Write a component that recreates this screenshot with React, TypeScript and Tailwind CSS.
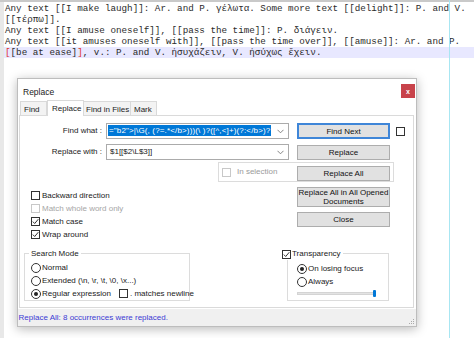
import React from "react";

const ui = { fontFamily: '"Liberation Sans", Arial, sans-serif' };
const mono = { fontFamily: '"Liberation Mono", "DejaVu Sans Mono", monospace' };

function Check({ checked = false, disabled = false }: { checked?: boolean; disabled?: boolean }) {
  return (
    <span
      className={`w-[9px] h-[9px] shrink-0 border bg-white flex items-center justify-center ${
        disabled ? "border-[#c8c8c8]" : "border-[#333]"
      }`}
    >
      {checked && (
        <svg width="7" height="7" viewBox="0 0 7 7">
          <path d="M0.8 3.6 L2.7 5.5 L6.3 1.2" fill="none" stroke="#333" strokeWidth="1" />
        </svg>
      )}
    </span>
  );
}

function Radio({ on = false }: { on?: boolean }) {
  return (
    <span className="w-[10px] h-[10px] shrink-0 rounded-full border border-[#333] bg-white flex items-center justify-center">
      {on && <span className="w-[4px] h-[4px] rounded-full bg-[#222]" />}
    </span>
  );
}

function Btn({ children, focus = false, className = "" }: { children: React.ReactNode; focus?: boolean; className?: string }) {
  return (
    <div
      className={`w-[93px] shrink-0 flex items-center justify-center text-center leading-[9px] text-[#111] bg-[#e1e1e1] ${
        focus ? "border-2 border-[#3f86d8]" : "border border-[#adadad]"
      } ${className}`}
    >
      {children}
    </div>
  );
}

function Chevron() {
  return (
    <svg width="7" height="5" viewBox="0 0 7 5" className="mr-[4px] shrink-0">
      <path d="M0.5 0.8 L3.5 3.8 L6.5 0.8" fill="none" stroke="#777" strokeWidth="0.9" />
    </svg>
  );
}

export default function App() {
  return (
    <div className="relative w-[474px] h-[338px] bg-white overflow-hidden">
      {/* editor */}
      <div className="flex flex-col h-full">
        <div className="h-[2px] bg-[#c9c9c9]" />
        <div className="flex flex-1">
          <div className="w-[4px] bg-[#e8e8e8]" />
          <div className="flex-1 pt-[1px] text-[9.25px] leading-[11px] text-[#2b2b2b] whitespace-pre" style={mono}>
            <div className="pl-[1px] h-[11px]">Any text [[I make laugh]]: Ar. and P. γέλωτα. Some more text [[delight]]: P. and V.</div>
            <div className="pl-[1px] h-[11px]">[[τέρπω]].</div>
            <div className="pl-[1px] h-[11px]">Any text [[I amuse oneself]], [[pass the time]]: P. διάγειν.</div>
            <div className="pl-[1px] h-[11px]">Any text [[it amuses oneself with]], [[pass the time over]], [[amuse]]: Ar. and P.</div>
            <div className="pl-[1px] h-[11px] bg-[#e8e8ff]">
              <span className="text-[#e0302a]">[</span>[be at ease]<span className="text-[#e0302a]">]</span>, v.: P. and V. ἡσυχάζειν, V. ἡσύχως ἔχειν.
            </div>
          </div>
        </div>
      </div>
      {/* edge marker */}
      <div className="absolute left-[449px] top-0 w-[1px] h-full bg-[#a8e6f2]" />

      {/* dialog */}
      <div
        className="absolute left-[17px] top-[78px] w-[400px] h-[249px] bg-white border border-[#bdbdbd] shadow-[0_2px_10px_rgba(0,0,0,0.28)] flex flex-col text-[8px] text-[#1a1a1a] whitespace-nowrap"
        style={ui}
      >
        {/* title bar */}
        <div className="h-[21px] flex items-start justify-between">
          <div className="pl-[5px] pt-[7px] text-[8.5px] text-[#222]">Replace</div>
          <div className="mt-[5px] mr-[1px] w-[14px] h-[14px] bg-[#c8434b] flex items-center justify-center text-white text-[7px] font-bold leading-none">
            x
          </div>
        </div>
        {/* tabs */}
        <div className="h-[15px] flex items-end pl-[2px]">
          <div className="w-[27px] h-[14px] border border-b-0 border-[#d9d9d9] bg-[#f3f3f3] pl-[3px] pt-[2px] text-[#222]">Find</div>
          <div className="w-[37px] h-[16px] border border-b-0 border-[#d9d9d9] bg-white pl-[4px] pt-[2px] text-[#222] relative top-[1px]">Replace</div>
          <div className="w-[47px] h-[14px] border border-b-0 border-l-0 border-[#d9d9d9] bg-[#f3f3f3] pl-[2px] pt-[2px] text-[#222]">Find in Files</div>
          <div className="w-[26px] h-[14px] border border-b-0 border-l-0 border-[#d9d9d9] bg-[#f3f3f3] pl-[3px] pt-[2px] text-[#222]">Mark</div>
        </div>
        {/* panel */}
        <div className="h-[193px] ml-[1px] mr-[2px] border border-[#dadada] flex flex-col">
          {/* row 1 */}
          <div className="mt-[7px] h-[16px] flex items-center">
            <div className="w-[82px] text-right text-[#222]">Find what :</div>
            <div className="ml-[4px] w-[183px] h-[16px] border border-[#ababab] flex items-center overflow-hidden">
              <div className="flex-1 overflow-hidden whitespace-nowrap pl-[1px]">
                <span className="bg-[#0078d7] text-white px-[1px] py-[1px] tracking-[0.15px]">{'="b2">|\\G(, (?=.*</b>)))(\\ )?([^,<]+)(?:</b>)?'}</span>
              </div>
              <div className="w-[10px] flex justify-end shrink-0"><Chevron /></div>
            </div>
            <Btn focus className="ml-[8px] h-[16px]">Find Next</Btn>
            <div className="ml-[6px]"><Check /></div>
          </div>
          {/* row 2 */}
          <div className="mt-[5px] h-[16px] flex items-center">
            <div className="w-[82px] text-right text-[#222]">Replace with :</div>
            <div className="ml-[4px] w-[183px] h-[16px] border border-[#ababab] flex items-center overflow-hidden">
              <div className="flex-1 whitespace-nowrap pl-[3px]">$1[[$2\L$3]]</div>
              <Chevron />
            </div>
            <Btn className="ml-[8px] h-[15px] mt-[1px]">Replace</Btn>
          </div>
          {/* bottom section */}
          <div className="mt-[2px] flex">
            {/* left column */}
            <div className="w-[198px] shrink-0 flex flex-col pt-[27px]">
              <div className="h-[13px] flex items-center pl-[11px] gap-[1px]"><Check /><span className="ml-[1px]">Backward direction</span></div>
              <div className="h-[13px] flex items-center pl-[11px] gap-[1px] text-[#a6a6a6]"><Check disabled /><span className="ml-[1px]">Match whole word only</span></div>
              <div className="h-[13px] flex items-center pl-[11px] gap-[1px]"><Check checked /><span className="ml-[1px]">Match case</span></div>
              <div className="h-[13px] flex items-center pl-[11px] gap-[1px]"><Check checked /><span className="ml-[1px]">Wrap around</span></div>
              <div className="mt-[12px] ml-[4px] w-[166px] h-[48px] border border-[#dcdcdc] relative flex flex-col pt-[7px]">
                <div className="absolute left-[4px] top-[-6px] bg-white px-[2px] text-[#222]">Search Mode</div>
                <div className="h-[13.5px] flex items-center pl-[6px]"><Radio /><span className="ml-[1px]">Normal</span></div>
                <div className="h-[13.5px] flex items-center pl-[6px]"><Radio /><span className="ml-[1px]">Extended (\n, \r, \t, \0, \x...)</span></div>
                <div className="h-[13.5px] flex items-center pl-[6px]">
                  <Radio on />
                  <span className="ml-[1px]">Regular expression</span>
                  <span className="ml-[8px]"><Check /></span>
                  <span className="ml-[2px]">. matches newline</span>
                </div>
              </div>
            </div>
            {/* right column */}
            <div className="flex flex-col">
              <div className="w-[176px] h-[20px] border border-[#dcdcdc] flex items-center pl-[3px] pr-[3px]">
                <Check disabled />
                <span className="ml-[6px] text-[#9a9a9a]">In selection</span>
                <Btn className="ml-auto h-[15px] mt-[2px]">Replace All</Btn>
              </div>
              <Btn className="ml-[79px] mt-[5px] h-[20px]">
                <span>Replace All in All Opened<br />Documents</span>
              </Btn>
              <Btn className="ml-[79px] mt-[5px] h-[15px]">Close</Btn>
              <div className="mt-[26px] ml-[69px] w-[102px] h-[48px] border border-[#dcdcdc] relative flex flex-col pt-[8px]">
                <div className="absolute left-[-6px] top-[-6px] bg-white flex items-center pr-[2px]">
                  <Check checked />
                  <span className="ml-[1px]">Transparency</span>
                </div>
                <div className="h-[13px] flex items-center pl-[9px]"><Radio on /><span className="ml-[1px]">On losing focus</span></div>
                <div className="h-[13px] flex items-center pl-[9px]"><Radio /><span className="ml-[1px]">Always</span></div>
                <div className="h-[11px] flex items-center pl-[9px]">
                  <div className="w-[78px] h-[3px] bg-[#e3e3e3] border border-[#d4d4d4]" />
                  <div className="w-[3px] h-[7px] bg-[#0078d7] rounded-[1px] ml-[-2px]" />
                </div>
              </div>
            </div>
          </div>
        </div>
        <div className="h-[1px]" />
        {/* status bar */}
        <div className="h-[17px] bg-[#f0f0f0] flex items-center justify-between">
          <span className="text-[#3b3bd4] pl-[0.5px]">Replace All: 8 occurrences were replaced.</span>
          <svg width="8" height="8" viewBox="0 0 8 8" className="mr-[1px] self-end mb-[1px]">
            <rect x="6" y="2" width="1" height="1" fill="#aaa" />
            <rect x="4" y="4" width="1" height="1" fill="#aaa" />
            <rect x="6" y="4" width="1" height="1" fill="#aaa" />
            <rect x="2" y="6" width="1" height="1" fill="#aaa" />
            <rect x="4" y="6" width="1" height="1" fill="#aaa" />
            <rect x="6" y="6" width="1" height="1" fill="#aaa" />
          </svg>
        </div>
      </div>
    </div>
  );
}
